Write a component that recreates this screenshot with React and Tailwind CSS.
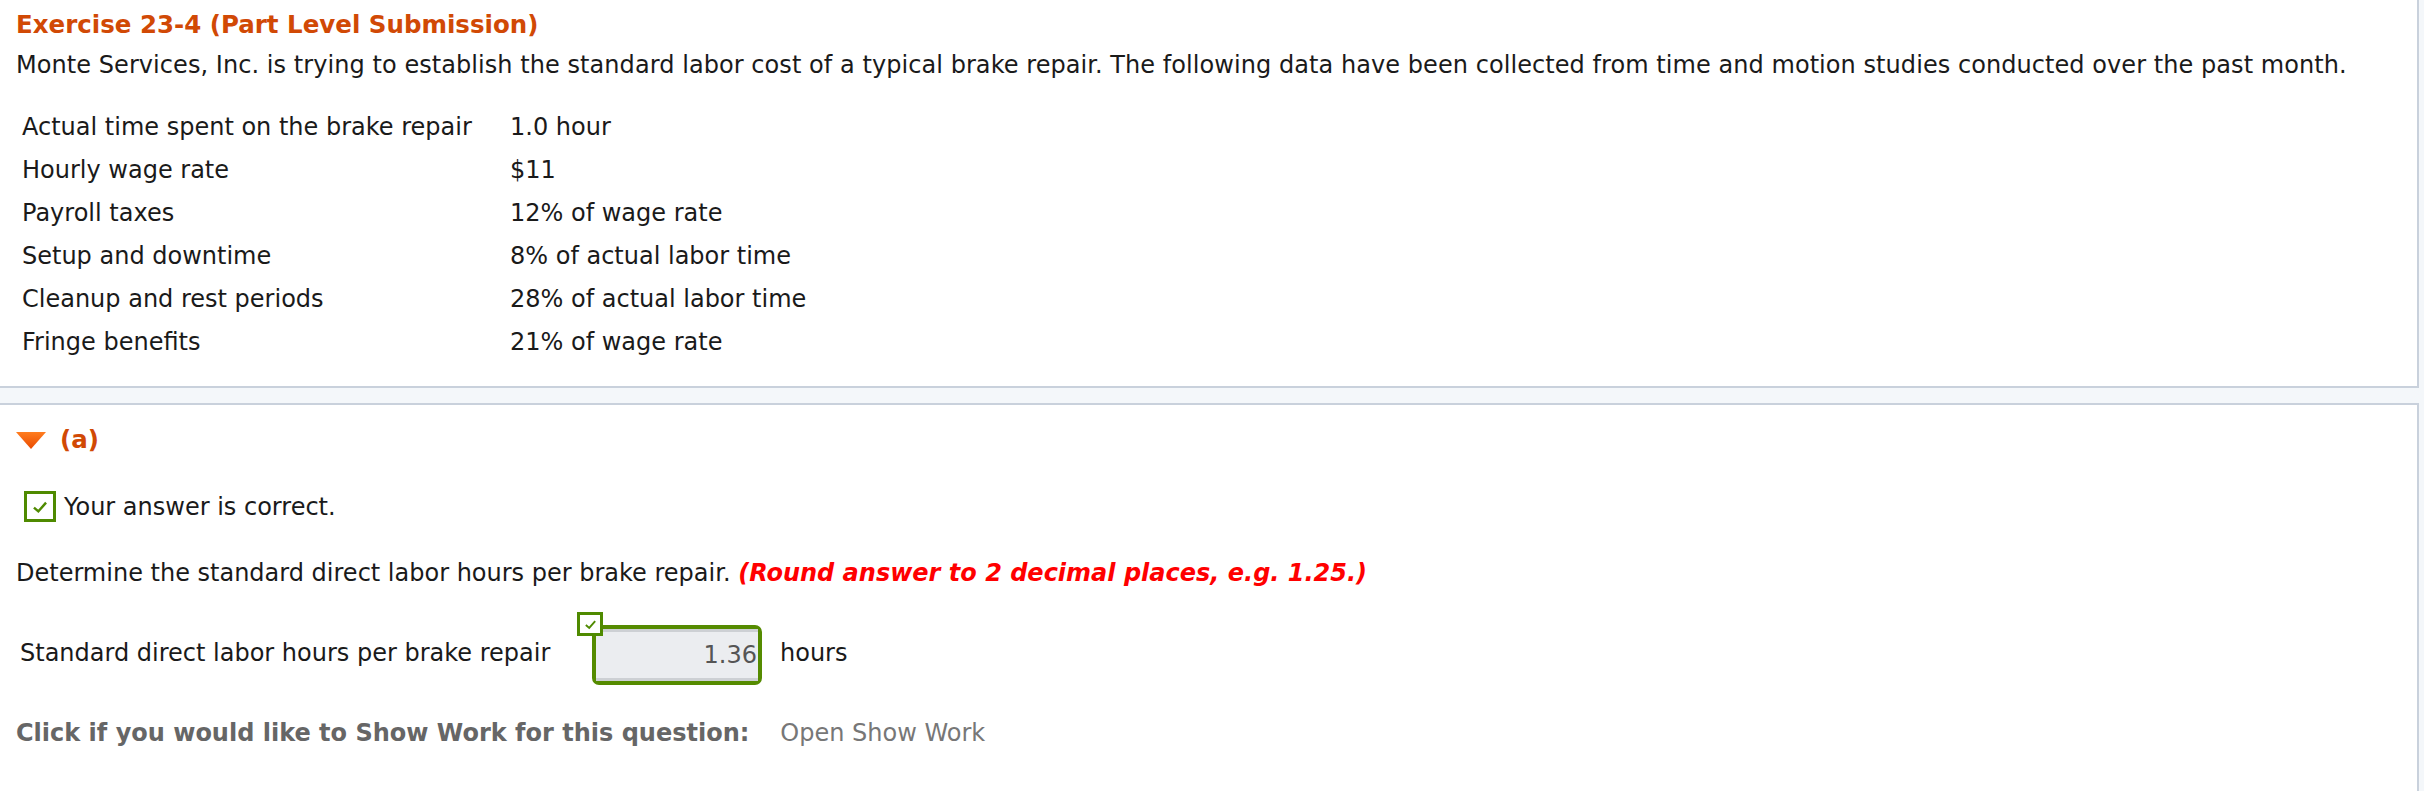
import React from "react";

const rows = [
  ["Actual time spent on the brake repair", "1.0 hour"],
  ["Hourly wage rate", "$11"],
  ["Payroll taxes", "12% of wage rate"],
  ["Setup and downtime", "8% of actual labor time"],
  ["Cleanup and rest periods", "28% of actual labor time"],
  ["Fringe benefits", "21% of wage rate"],
];

function Check({ className }) {
  return (
    <svg viewBox="0 0 20 20" className={className}>
      <path d="M4.5 10.5 L8.5 14 L15.5 6" fill="none" stroke="#4f8a00" strokeWidth="2.2" />
    </svg>
  );
}

export default function App() {
  return (
    <div
      className="w-full h-[791px] bg-[#f4f7fa] text-[24px] text-[#1a1a1a] overflow-hidden"
      style={{ fontFamily: '"DejaVu Sans", Verdana, sans-serif' }}
    >
      {/* Exercise panel */}
      <div className="w-[2419px] h-[388px] bg-white border-r-2 border-b-2 border-[#c9d1dc] pt-[8px] pl-[16px]">
        <h1 className="text-[24.5px] leading-[34px] font-bold text-[#d14905]">
          Exercise 23-4 (Part Level Submission)
        </h1>
        <p className="mt-[6px] leading-[34px] tracking-[0.06px]">
          Monte Services, Inc. is trying to establish the standard labor cost of a typical brake repair. The following data have been collected from time and motion studies conducted over the past month.
        </p>
        <div className="mt-[23px] pl-[6px]">
          {rows.map(([label, value]) => (
            <div key={label} className="flex h-[43px] items-center">
              <div className="w-[488px]">{label}</div>
              <div>{value}</div>
            </div>
          ))}
        </div>
      </div>

      {/* Part (a) */}
      <div className="mt-[15px] w-[2419px] h-[400px] bg-white border-t-2 border-r-2 border-[#c9d1dc] pt-[18px] pl-[16px]">
        <div className="flex items-center h-[34px] gap-[14px]">
          <svg width="30" height="17" viewBox="0 0 30 17">
            <defs>
              <linearGradient id="tri" x1="0" y1="0" x2="0" y2="1">
                <stop offset="0" stopColor="#ff7d1f" />
                <stop offset="1" stopColor="#e94a00" />
              </linearGradient>
            </defs>
            <path d="M0 0 H30 L15 17 Z" fill="url(#tri)" />
          </svg>
          <span className="text-[24.5px] font-bold text-[#d14905]">(a)</span>
        </div>

        <div className="mt-[34px] ml-[8px] flex items-center h-[31px] gap-[8px]">
          <div className="w-[32px] h-[31px] border-[3px] border-[#4f8a00] bg-white flex items-center justify-center">
            <Check className="w-[22px] h-[22px]" />
          </div>
          <span>Your answer is correct.</span>
        </div>

        <p className="mt-[34px] leading-[34px]">
          Determine the standard direct labor hours per brake repair.{" "}
          <span className="font-bold italic text-[#ff0000]">(Round answer to 2 decimal places, e.g. 1.25.)</span>
        </p>

        <div className="mt-[35px] flex items-center h-[60px]">
          <div className="w-[576px] pl-[4px] -mt-[4px]">Standard direct labor hours per brake repair</div>
          <div className="relative w-[170px] h-[60px] rounded-[7px] border-[4px] border-[#558b00] bg-[#ebedf0] overflow-visible">
            <div className="h-full border-t-[3px] border-b-[3px] border-[#cdd0d4] flex items-center justify-end pr-[1px] text-[#555]">
              1.36
            </div>
            <div className="absolute -left-[19px] -top-[17px] w-[26px] h-[24px] border-[3px] border-[#4f8a00] bg-white flex items-center justify-center">
              <Check className="w-[17px] h-[17px]" />
            </div>
          </div>
          <span className="ml-[18px] -mt-[4px]">hours</span>
        </div>

        <div className="mt-[31px] flex items-center h-[34px]">
          <span className="font-bold text-[#666]">Click if you would like to Show Work for this question:</span>
          <span className="ml-[31px] text-[#777]">Open Show Work</span>
        </div>
      </div>
    </div>
  );
}
